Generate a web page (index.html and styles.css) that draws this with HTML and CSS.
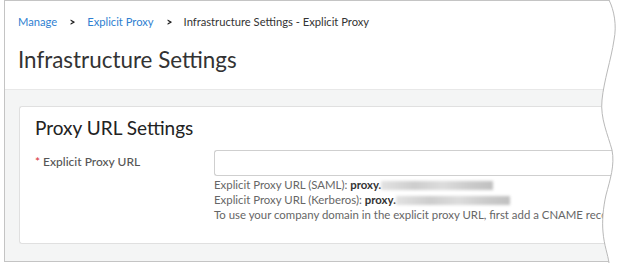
FILE: index.html
```html
<!DOCTYPE html>
<html>
<head>
<meta charset="utf-8">
<link rel="stylesheet" href="styles.css">
</head>
<body>
<div class="frame">
  <header class="head">
    <nav class="crumbs">
      <a class="crumb-link">Manage</a>
      <span class="chev">&gt;</span>
      <a class="crumb-link">Explicit Proxy</a>
      <span class="chev">&gt;</span>
      <span class="crumb-current">Infrastructure Settings - Explicit Proxy</span>
    </nav>
    <h1 class="page-title">Infrastructure Settings</h1>
  </header>
  <section class="body-area">
    <div class="card">
      <h2 class="card-title">Proxy URL Settings</h2>
      <div class="form-row">
        <label class="field-label"><span class="req">*</span>Explicit Proxy URL</label>
        <div class="field">
          <div class="input"></div>
          <div class="help">Explicit Proxy URL (SAML): <b>proxy.</b><span class="blur b1"></span></div>
          <div class="help">Explicit Proxy URL (Kerberos): <b>proxy.</b><span class="blur b2"></span></div>
          <div class="help">To use your company domain in the explicit proxy URL, first add a CNAME reco</div>
        </div>
      </div>
    </div>
  </section>
</div>
<svg class="tear" width="620" height="271" viewBox="0 0 620 271">
  <path d="M609 0 C614 10 617 25 614 40 C611 60 604 80 602 100 C600 118 608 135 612 150 C615 165 610 180 606 195 C603 208 602 222 603 232 C604 245 608 255 609 263 L620 263 L620 0 Z" fill="#fff"/>
  <path d="M609 0 C614 10 617 25 614 40 C611 60 604 80 602 100 C600 118 608 135 612 150 C615 165 610 180 606 195 C603 208 602 222 603 232 C604 245 608 255 609 263" fill="none" stroke="#b9b9b9" stroke-width="1"/>
</svg>
</body>
</html>
```
FILE: styles.css
```css
html, body {
  margin: 0;
  padding: 0;
  width: 620px;
  height: 271px;
  overflow: hidden;
  background: #fff;
  font-family: Lato, "Open Sans", "Liberation Sans", sans-serif;
  position: relative;
}
.frame {
  margin-left: 4px;
  width: 616px;
  height: 262px;
  border: 1px solid #c4c4c4;
  border-right: none;
  box-sizing: border-box;
  display: flex;
  flex-direction: column;
  overflow: hidden;
}
.head {
  height: 88px;
  padding: 12px 0 0 13px;
  box-sizing: border-box;
}
.crumbs {
  display: flex;
  align-items: center;
  font-size: 11.2px;
  line-height: 18px;
  color: #333;
}
.crumb-link {
  color: #2f7fd1;
}
.chev {
  font-weight: 900;
  color: #222;
  font-size: 12px;
  margin: 0 11px 0 12px;
  transform: scaleX(0.85);
}
.crumb-current {
  color: #333;
}
.page-title {
  margin: 14px 0 0 0;
  font-size: 22.4px;
  font-weight: 400;
  line-height: 30px;
  color: #333;
}
.body-area {
  flex: 1;
  background: #f4f5f5;
  border-top: 1px solid #e8e8e8;
  padding: 16px 0 17px 14px;
  display: flex;
}
.card {
  flex: 1;
  background: #fff;
  border: 1px solid #e0e0e0;
  border-right: none;
  border-radius: 3px 0 0 3px;
  padding: 0 0 0 15px;
  min-width: 0;
}
.card-title {
  margin: 9px 0 0 0;
  font-size: 19px;
  font-weight: 400;
  line-height: 24px;
  color: #222;
}
.form-row {
  display: flex;
  margin-top: 10px;
}
.field-label {
  width: 179px;
  flex: none;
  font-size: 12px;
  color: #555;
  font-weight: 500;
  padding-top: 5px;
  line-height: 14px;
}
.req {
  color: #d9363e;
  font-size: 12px;
  margin-right: 3px;
}
.field {
  flex: 1;
  min-width: 0;
}
.input {
  height: 24px;
  border: 1px solid #cfcfcf;
  border-right: none;
  border-radius: 3px 0 0 3px;
  background: #fff;
  margin-bottom: 1px;
}
.help {
  font-size: 11.4px;
  line-height: 15px;
  color: #666;
  white-space: nowrap;
}
.help b {
  color: #333;
  font-weight: 700;
}
.blur {
  display: inline-block;
  height: 9px;
  vertical-align: -1px;
  background: linear-gradient(90deg, #e2e2e2 0%, #cdcdcd 30%, #dcdcdc 55%, #cacaca 80%, #c0c0c0 100%);
  filter: blur(1.5px);
}
.b1 { width: 112px; }
.b2 { width: 114px; }
.tear {
  position: absolute;
  left: 0;
  top: 0;
}
```
